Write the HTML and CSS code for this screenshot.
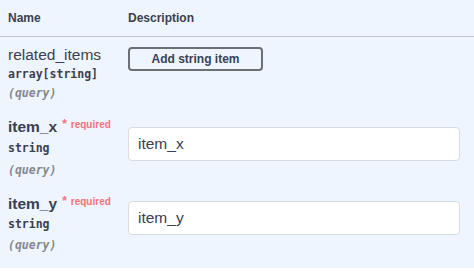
FILE: index.html
```html
<!DOCTYPE html>
<html lang="en">

<head>
    <meta charset="UTF-8">
    <meta name="viewport" content="width=device-width, initial-scale=1.0">
    <title>parameters</title>
    <link rel="stylesheet" href="styles.css">
</head>

<body>
    <div class="params">
        <div class="params-head">
            <div class="col-name">Name</div>
            <div class="col-desc">Description</div>
        </div>

        <div class="param param-array">
            <div class="col-name">
                <div class="param-name plain">related_items</div>
                <div class="param-type">array[string]</div>
                <div class="param-in">(query)</div>
            </div>
            <div class="col-desc">
                <button class="add-item">Add string item</button>
            </div>
        </div>

        <div class="param param-mid">
            <div class="col-name">
                <div class="param-name">item_x<span class="req"><span class="star">*</span>required</span></div>
                <div class="param-type">string</div>
                <div class="param-in">(query)</div>
            </div>
            <div class="col-desc">
                <input type="text" class="param-input" placeholder="item_x">
            </div>
        </div>

        <div class="param param-last">
            <div class="col-name">
                <div class="param-name">item_y<span class="req"><span class="star">*</span>required</span></div>
                <div class="param-type">string</div>
                <div class="param-in">(query)</div>
            </div>
            <div class="col-desc">
                <input type="text" class="param-input" placeholder="item_y">
            </div>
        </div>
    </div>
</body>

</html>
```

FILE: styles.css
```css
body {
    margin: 0;
    background-color: #ffffff;
    font-family: "Liberation Sans", Arial, sans-serif;
    color: #3b4151;
}

.params {
    background-color: #eef5fe;
    height: 268px;
    overflow: hidden;
}

.params-head {
    display: flex;
    height: 36px;
    border-bottom: 1px solid #c3c7cc;
    font-size: 12px;
    font-weight: bold;
    line-height: 36px;
}

.col-name {
    width: 120px;
    padding-left: 8px;
    flex-shrink: 0;
}

.col-desc {
    flex: 1;
    padding-right: 14px;
}

.param {
    display: flex;
    padding-top: 13px;
}

.param-array {
    padding-top: 8px;
}

.param-last {
    padding-top: 12px;
}

.param-name {
    font-size: 15.5px;
    font-weight: bold;
    line-height: 21px;
}

.param-name.plain {
    font-weight: normal;
    line-height: 20px;
}

.req {
    position: relative;
    top: -4px;
    margin-left: 5px;
    font-size: 10px;
    line-height: 1;
    font-weight: bold;
    color: #f4727c;
}

.star {
    font-size: 12px;
    line-height: 1;
    margin-right: 4px;
}

.param-type,
.param-in {
    font-family: "DejaVu Sans Mono", monospace;
    font-size: 11.5px;
    font-weight: bold;
    line-height: 21px;
}

.param-in {
    font-style: italic;
    color: #85888e;
}

.param-array .param-type,
.param-array .param-in {
    line-height: 19px;
}

.param-mid .param-type,
.param-mid .param-in {
    line-height: 22px;
}

.add-item {
    margin-top: 2px;
    width: 135px;
    height: 24px;
    background-color: transparent;
    border: 2px solid #6c6f74;
    border-radius: 4px;
    font-family: "Liberation Sans", Arial, sans-serif;
    font-size: 12px;
    font-weight: bold;
    color: #3b4151;
    padding: 0;
}

.param-input {
    box-sizing: border-box;
    width: 100%;
    height: 34px;
    margin-top: 11px;
    padding: 0 9px;
    background-color: #ffffff;
    border: 1px solid #d8dce0;
    border-radius: 4px;
    font-family: "Liberation Sans", Arial, sans-serif;
    font-size: 15.5px;
    color: #3b4151;
}

.param-last .param-input {
    margin-top: 8px;
}

.param-input::placeholder {
    color: #3b4151;
}
```
